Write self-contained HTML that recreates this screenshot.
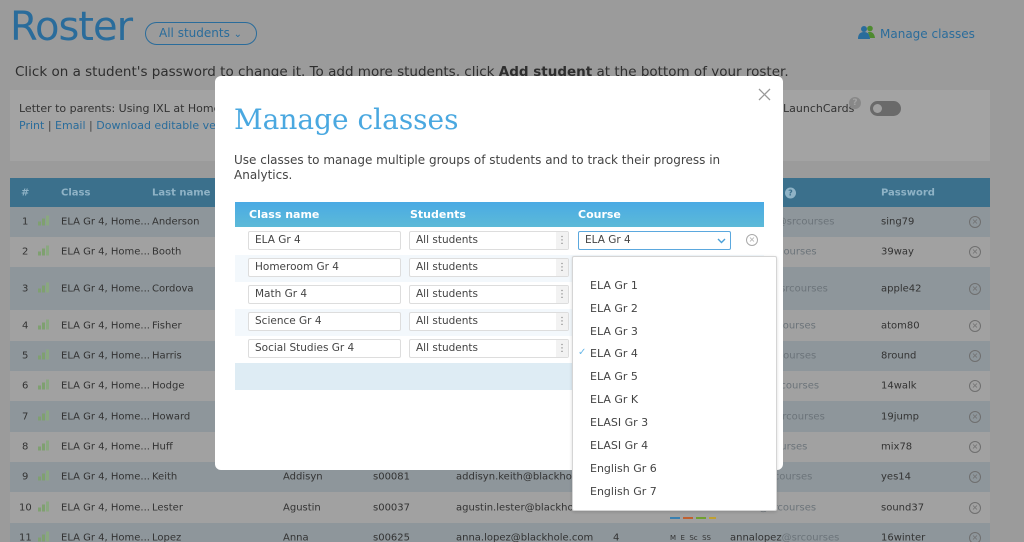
<!DOCTYPE html>
<html style="width:1024px;height:542px;overflow:hidden"><head><meta charset="utf-8"><style>
*{box-sizing:border-box;margin:0;padding:0}
body{width:1024px;height:542px;overflow:hidden;background:#9b9b9b;font-family:"DejaVu Sans","Liberation Sans",sans-serif;position:relative;color:#3a3a3a}
.a{position:absolute;white-space:nowrap}
.row{position:absolute;left:10px;width:980px;font-size:10px;color:#333;overflow:hidden}
.row span{position:absolute;top:50%;transform:translateY(-50%)}
.b{background:#8e969b}.l{background:#a1a1a1}
.bars{width:11px;height:10px}
.xc{width:12px;height:12px;border:1px solid #6f6f6f;border-radius:50%;font-size:8px;line-height:10px;text-align:center;color:#6f6f6f}
.dim{color:#6c747a}
.modal{position:absolute;left:215px;top:76px;width:568px;height:394px;background:#fff;border-radius:6px}
.inp{position:absolute;height:19px;border:1px solid #ddd;border-radius:2px;font-size:10.5px;color:#444;padding-left:6px;line-height:17px;background:#fff}
.dots{position:absolute;right:0;top:0;width:12px;height:17px;background:#f2f2f2;color:#777;font-size:10px;text-align:center;line-height:17px}
.dd{position:absolute;left:572px;top:256px;width:205px;height:255px;background:#fff;border:1px solid #d5d5d5;border-radius:2px;box-shadow:0 1px 3px rgba(0,0,0,.15)}
.dd div{position:absolute;left:17px;font-size:11px;color:#444}
</style></head><body>
<div class="a" style="left:10px;top:4px;font-size:40px;color:#2a6c9b;font-family:'DejaVu Sans',sans-serif;letter-spacing:-1px">Roster</div>
<div class="a" style="left:145px;top:22px;width:112px;height:23px;border:1px solid #2a6c9b;border-radius:12px;color:#2a6c9b;font-size:12px;line-height:21px;padding-left:13px">All students <span style="font-size:10px">&#8964;</span></div>
<svg class="a" style="left:858px;top:25px" width="18" height="14"><circle cx="6" cy="4" r="3" fill="#2a6c9b"/><path d="M0 14 Q0 7 6 7 Q12 7 12 14Z" fill="#2a6c9b"/><circle cx="12" cy="3.5" r="2.8" fill="#4e8a2f"/><path d="M10 7 Q16 6 17 13 L12 13Z" fill="#4e8a2f"/></svg>
<div class="a" style="left:880px;top:27px;font-size:12px;color:#2a6c9b">Manage classes</div>
<div class="a" style="left:15px;top:64px;font-size:13.5px;color:#2e2e2e">Click on a student's password to change it. To add more students, click <b>Add student</b> at the bottom of your roster.</div>
<div class="a" style="left:10px;top:90px;width:980px;height:71px;background:#a3a3a3"></div>
<div class="a" style="left:19px;top:102px;font-size:11px;color:#333">Letter to parents: Using IXL at Home</div>
<div class="a" style="left:19px;top:119px;font-size:11px;color:#2a6c9b">Print <span style="color:#444">|</span> Email <span style="color:#444">|</span> Download editable version</div>
<div class="a" style="left:783px;top:102px;font-size:11px;color:#333">LaunchCards</div>
<div class="a" style="left:849px;top:97px;width:12px;height:12px;border-radius:50%;background:#888;color:#a3a3a3;font-size:9px;text-align:center;line-height:12px;font-weight:bold">?</div>
<div class="a" style="left:870px;top:101px;width:31px;height:15px;border-radius:8px;background:#6a6a6a"><div style="position:absolute;left:3px;top:3px;width:9px;height:9px;border-radius:50%;background:#a0a0a0"></div></div>
<div class="row" style="top:178px;height:29px;background:#3b708c;color:#8fb3c6;font-weight:bold;font-size:10px">
<span style="left:11px">#</span><span style="left:51px">Class</span><span style="left:142px">Last name</span><span style="left:775px;width:11px;height:11px;border-radius:50%;background:#8fb3c6;color:#3b708c;text-align:center;line-height:11px;font-size:8px">?</span><span style="left:871px">Password</span></div>
<div id="rows"></div>
<script>
var d=[["1","Anderson","","","","anderson@srcourses","sing79",207,30],["2","Booth","","","","booth@srcourses","39way",237,30],["3","Cordova","","","","cordova@srcourses","apple42",267,43],["4","Fisher","","","","fisher@srcourses","atom80",310,31],["5","Harris","","","","harris@srcourses","8round",341,30],["6","Hodge","","","","hodge@srcourses","14walk",371,30],["7","Howard","","","","howard@srcourses","19jump",401,31],["8","Huff","","","","huff@srcourses","mix78",432,30],["9","Keith","Addisyn","s00081","addisyn.keith@blackhole.com","keith@srcourses","yes14",462,30],["10","Lester","Agustin","s00037","agustin.lester@blackhole.com","lester@srcourses","sound37",492,31],["11","Lopez","Anna","s00625","anna.lopez@blackhole.com","annalopez@srcourses","16winter",523,30]];
var h="";d.forEach(function(r,i){var u=r[5].split("@");h+='<div class="row '+(i%2?'l':'b')+'" style="top:'+r[7]+'px;height:'+r[8]+'px"><span style="left:'+(r[0].length>1?9:12)+'px">'+r[0]+'</span><span style="left:28px"><svg class="bars" viewBox="0 0 11 10"><rect x="0" y="6" width="3" height="4" fill="#7fa070"/><rect x="4" y="3" width="3" height="7" fill="#7fa070"/><rect x="8" y="0" width="3" height="10" fill="#8aa880"/></svg></span><span style="left:51px">ELA Gr 4, Home...</span><span style="left:142px">'+r[1]+'</span><span style="left:273px">'+r[2]+'</span><span style="left:363px">'+r[3]+'</span><span style="left:446px">'+r[4]+'</span>'+(i==10?'<span style="left:603px">4</span><span style="left:660px;font-size:7px">M&nbsp; E&nbsp; Sc&nbsp; SS</span>':'')+(i==9?'<span style="left:660px;top:85%;width:46px;height:2px;background:linear-gradient(90deg,#3a80b0 0 10px,transparent 10px 13px,#c06030 13px 23px,transparent 23px 26px,#70a030 26px 36px,transparent 36px 39px,#c0a030 39px)"></span>':'')+'<span style="left:720px">'+u[0]+'<i class="dim" style="font-style:normal">@'+u[1]+'</i></span><span style="left:871px">'+r[6]+'</span><span class="xc" style="left:959px">×</span></div>'});
document.getElementById("rows").innerHTML=h;
</script>
<div class="modal">
<svg class="a" style="left:543px;top:12px" width="13" height="13"><path d="M1 1L12 12M12 1L1 12" stroke="#999" stroke-width="1.3"/></svg>
<div class="a" style="left:19px;top:27px;font-size:28px;color:#4aa8e0;font-family:'DejaVu Serif',serif">Manage classes</div>
<div class="a" style="left:19px;top:77px;font-size:12px;color:#444;line-height:15px;white-space:normal;width:520px">Use classes to manage multiple groups of students and to track their progress in Analytics.</div>
<div class="a" style="left:20px;top:126px;width:529px;height:25px;background:linear-gradient(#4aaae4,#5cbad8);color:#fff;font-weight:bold;font-size:11px;line-height:25px"><span class="a" style="left:14px">Class name</span><span class="a" style="left:175px">Students</span><span class="a" style="left:343px">Course</span></div>
<div class="a" style="left:20px;top:179px;width:529px;height:27px;background:#f3f8fc"></div>
<div class="a" style="left:20px;top:233px;width:529px;height:27px;background:#f3f8fc"></div>
<div class="a" style="left:20px;top:287px;width:529px;height:27px;background:#deecf4"></div>
</div>
<div id="inps"></div>
<script>
var n=["ELA Gr 4","Homeroom Gr 4","Math Gr 4","Science Gr 4","Social Studies Gr 4"],h2="";
n.forEach(function(t,i){var y=231+i*27;h2+='<div class="inp" style="left:248px;top:'+y+'px;width:153px">'+t+'</div><div class="inp" style="left:409px;top:'+y+'px;width:160px">All students<div class="dots">&#8942;</div></div>'});
document.getElementById("inps").innerHTML=h2;
</script>
<div class="inp" style="left:578px;top:231px;width:153px;border-color:#5ba8de">ELA Gr 4<svg style="position:absolute;right:4px;top:6px" width="9" height="6"><path d="M1 1L4.5 4.5L8 1" stroke="#4aa0d8" stroke-width="1.4" fill="none"/></svg></div>
<div class="a xc" style="left:746px;top:234px;border-color:#aaa;color:#aaa">×</div>
<div class="dd">
<div style="top:22px">ELA Gr 1</div><div style="top:45px">ELA Gr 2</div><div style="top:68px">ELA Gr 3</div>
<div style="top:90px"><span style="position:absolute;left:-12px;color:#6ab8e8;font-size:10px">&#10003;</span>ELA Gr 4</div>
<div style="top:113px">ELA Gr 5</div><div style="top:136px">ELA Gr K</div><div style="top:159px">ELASI Gr 3</div><div style="top:182px">ELASI Gr 4</div><div style="top:205px">English Gr 6</div><div style="top:228px">English Gr 7</div>
</div>
</body></html>
